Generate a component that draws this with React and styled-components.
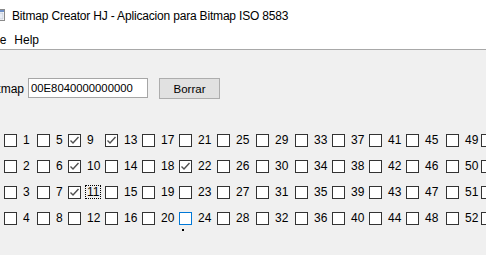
import React from "react";
import styled, { createGlobalStyle } from "styled-components";

const GlobalStyle = createGlobalStyle`
  html, body { margin: 0; padding: 0; }
  body {
    width: 486px;
    height: 255px;
    overflow: hidden;
    background: #f0f0f0;
    font-family: "Liberation Sans", Arial, sans-serif;
    font-size: 12px;
    color: #000;
  }
`;

const Window = styled.div`
  position: relative;
  width: 486px;
  height: 255px;
  overflow: hidden;
  display: flex;
  flex-direction: column;
`;

const TitleBar = styled.div`
  height: 30px;
  background: #fff;
  display: flex;
  align-items: center;
  gap: 6px;
  margin-left: -10px;
`;

const TitleText = styled.span`
  font-size: 12px;
  letter-spacing: -0.18px;
  white-space: nowrap;
  padding-top: 1px;
`;

const MenuBar = styled.div`
  height: 19px;
  background: #fff;
  border-bottom: 1px solid #a8a8a8;
  display: flex;
  align-items: center;
  gap: 8px;
  margin-left: -13px;
`;

const MenuItem = styled.span`
  font-size: 12px;
  white-space: nowrap;
`;

const Content = styled.div`
  display: flex;
  flex-direction: column;
`;

const BitmapRow = styled.div`
  margin-top: 28px;
  height: 21px;
  display: flex;
  align-items: center;
`;

const FieldLabel = styled.span`
  width: 24px;
  text-align: right;
  direction: rtl;
  white-space: nowrap;
  margin-right: 4px;
`;

const TextBox = styled.div`
  box-sizing: border-box;
  width: 120px;
  height: 20px;
  margin-top: -1px;
  background: #fff;
  border: 1px solid #a6a6a6;
  padding-left: 2px;
  font-size: 11.3px;
  display: flex;
  align-items: center;
  white-space: nowrap;
`;

const Button = styled.div`
  box-sizing: border-box;
  margin-left: 11px;
  width: 61px;
  height: 21px;
  background: #e1e1e1;
  border: 1px solid #adadad;
  font-size: 11.5px;
  display: flex;
  align-items: center;
  justify-content: center;
`;

const widths = [33, 31, 37, 37, 37, 38, 39, 39, 37, 37, 37, 40, 35, 40];

const Grid = styled.div`
  margin-top: 28px;
  padding-left: 4px;
  display: grid;
  grid-auto-flow: column;
  grid-template-rows: repeat(4, 26px);
  grid-template-columns: ${widths.map((w) => `${w}px`).join(" ")};
`;

const Cell = styled.div`
  display: flex;
  align-items: center;
  white-space: nowrap;
`;

const Box = styled.div`
  box-sizing: border-box;
  width: 13px;
  height: 13px;
  flex: none;
  background: #fff;
  border: 1px solid ${(p) => (p.$hover ? "#0078d7" : "#333")};
  display: flex;
  align-items: center;
  justify-content: center;
`;

const Label = styled.span`
  margin-left: 4px;
  padding: 0 1px;
  border: 1px dotted ${(p) => (p.$focus ? "#000" : "transparent")};
  line-height: 12px;
`;

const Cursor = styled.div`
  position: absolute;
  left: 182px;
  top: 229px;
  width: 2px;
  height: 2px;
  background: #000;
`;

const AppIcon = () => (
  <svg width="16" height="16" viewBox="0 0 16 16">
    <rect x="1.5" y="2.5" width="13" height="11" fill="#fff" stroke="#8a8a8a" />
    <rect x="2" y="3" width="12" height="2" fill="#6d8fc7" />
    <rect x="3" y="6" width="10" height="6" fill="#e8edf5" stroke="#b0b8c8" strokeWidth="0.6" />
  </svg>
);

const Check = () => (
  <svg width="11" height="11" viewBox="0 0 11 11">
    <path d="M1.5 5.5 L4 8 L9.5 2" fill="none" stroke="#505050" strokeWidth="1.4" />
  </svg>
);

const checked = new Set([9, 10, 11, 13, 22]);

export default function App() {
  const cells = [];
  for (let c = 0; c < widths.length; c++) {
    for (let r = 0; r < 4; r++) {
      const n = c * 4 + r + 1;
      cells.push(
        <Cell key={n}>
          <Box $hover={n === 24}>{checked.has(n) && <Check />}</Box>
          <Label $focus={n === 11}>{n}</Label>
        </Cell>
      );
    }
  }
  return (
    <>
      <GlobalStyle />
      <Window>
        <TitleBar>
          <AppIcon />
          <TitleText>Bitmap Creator HJ - Aplicacion para Bitmap ISO 8583</TitleText>
        </TitleBar>
        <MenuBar>
          <MenuItem>File</MenuItem>
          <MenuItem>Help</MenuItem>
        </MenuBar>
        <Content>
          <BitmapRow>
            <FieldLabel>Bitmap</FieldLabel>
            <TextBox>00E8040000000000</TextBox>
            <Button>Borrar</Button>
          </BitmapRow>
          <Grid>{cells}</Grid>
        </Content>
        <Cursor />
      </Window>
    </>
  );
}
